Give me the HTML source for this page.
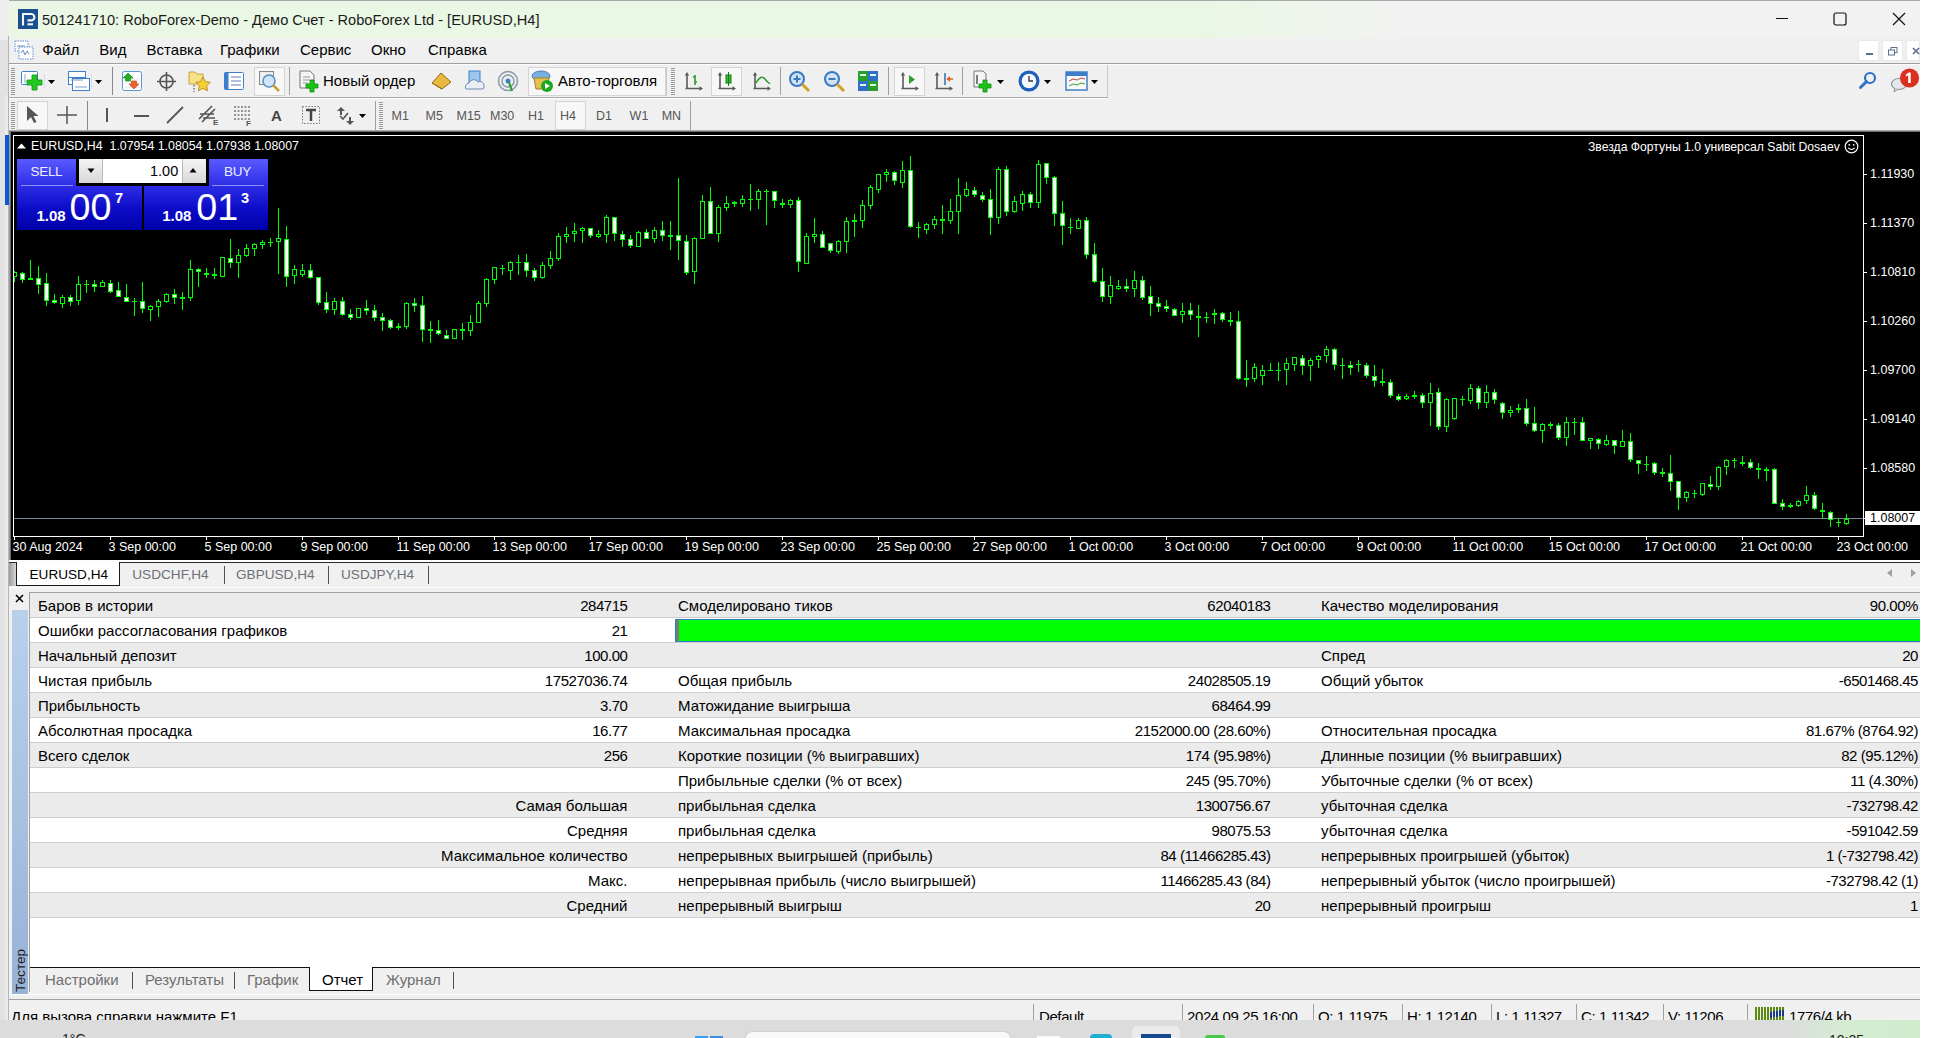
<!DOCTYPE html>
<html><head><meta charset="utf-8">
<style>
*{box-sizing:border-box;margin:0;padding:0}
html,body{width:1938px;height:1038px;overflow:hidden;background:#fff;font-family:"Liberation Sans",sans-serif;color:#000;position:relative}
.a{position:absolute}
.t{position:absolute;white-space:pre;line-height:1}
svg{position:absolute;overflow:visible}
</style></head><body>
<div class="a" style="left:0px;top:0px;width:9px;height:1038px;background:#e2e2e2;"></div>
<div class="a" style="left:0px;top:0px;width:9px;height:40px;background:#eeeeee;"></div>
<div class="a" style="left:5px;top:95px;width:3px;height:925px;background:#ebebeb;"></div>
<div class="a" style="left:8px;top:36px;width:1px;height:984px;background:#b4b4b4;"></div>
<div class="a" style="left:9px;top:0px;width:1911px;height:1020px;background:#f0f0f0;"></div>
<div class="a" style="left:9px;top:0px;width:1911px;height:38px;background:linear-gradient(90deg,#eaf7e5 0px,#eaf7e5 1190px,#f2f2f2 1410px,#f2f2f2 100%);"></div>
<div class="a" style="left:9px;top:0px;width:1911px;height:1px;background:#a8a8a8;"></div>
<svg style="left:18px;top:9px" width="20" height="20" viewBox="0 0 20 20"><rect width="20" height="20" fill="#1a5090"/><path d="M5 16.5V5h8.2a3.2 3.2 0 0 1 0 6.4H9.5" stroke="#f4f6fa" stroke-width="2.1" fill="none"/><path d="M9.5 15.3h5.5" stroke="#f4f6fa" stroke-width="2.1"/></svg>
<div class="t" style="left:42px;top:12.6px;font-size:14.6px;color:#1a1a1a;">501241710: RoboForex-Demo - Демо Счет - RoboForex Ltd - [EURUSD,H4]</div>
<div class="a" style="left:1776px;top:18px;width:12px;height:1px;background:#111;"></div>
<svg style="left:1833px;top:12px" width="14" height="14"><rect x="1" y="1" width="12" height="12" rx="2" fill="none" stroke="#111" stroke-width="1.2"/></svg>
<svg style="left:1892px;top:12px" width="14" height="14"><path d="M1 1L13 13M13 1L1 13" stroke="#111" stroke-width="1.2"/></svg>
<svg style="left:14px;top:40px" width="21" height="21" viewBox="0 0 21 21"><rect x="1" y="1" width="13" height="10" fill="#fff" stroke="#5b8fd6" stroke-dasharray="1.5 1"/><rect x="5" y="7" width="14" height="12" fill="#fff" stroke="#5b8fd6" stroke-dasharray="1.5 1"/><path d="M3 6h8M7 13l2-3 2 5 2-4 2 3" stroke="#6b8fc0" fill="none" stroke-width="1"/></svg>
<div class="t" style="left:42.3px;top:42.3px;font-size:15px;color:#000;">Файл</div>
<div class="t" style="left:99.3px;top:42.3px;font-size:15px;color:#000;">Вид</div>
<div class="t" style="left:146.6px;top:42.3px;font-size:15px;color:#000;">Вставка</div>
<div class="t" style="left:220px;top:42.3px;font-size:15px;color:#000;">Графики</div>
<div class="t" style="left:300px;top:42.3px;font-size:15px;color:#000;">Сервис</div>
<div class="t" style="left:371px;top:42.3px;font-size:15px;color:#000;">Окно</div>
<div class="t" style="left:428px;top:42.3px;font-size:15px;color:#000;">Справка</div>
<div class="a" style="left:1858px;top:40px;width:21px;height:21px;background:#fff;border:1px solid #e8e8e8;border-radius:2px"></div>
<div class="a" style="left:1882px;top:40px;width:21px;height:21px;background:#fff;border:1px solid #e8e8e8;border-radius:2px"></div>
<div class="a" style="left:1906px;top:40px;width:14px;height:21px;background:#fff;border:1px solid #e8e8e8;border-radius:2px"></div>
<div class="a" style="left:1866px;top:53px;width:7px;height:2px;background:#5b6f8c;"></div>
<svg style="left:1888px;top:47px" width="10" height="10"><rect x="3" y="0.5" width="6" height="5" fill="none" stroke="#5b6f8c"/><rect x="0.5" y="3" width="6" height="5" fill="#fbfbfb" stroke="#5b6f8c"/></svg>
<svg style="left:1913px;top:47px" width="7" height="8"><path d="M0 1L6 7M6 1L0 7" stroke="#5b6f8c" stroke-width="1.6"/></svg>
<div class="a" style="left:9px;top:63px;width:1911px;height:1px;background:#a0a0a0;"></div>
<div class="a" style="left:9px;top:64px;width:1911px;height:1px;background:#fdfdfd;"></div>
<div class="a" style="left:1107px;top:65px;width:1px;height:33px;background:#c8c8c8;"></div>
<div class="a" style="left:11px;top:68px;width:4px;height:1px;background:#9a9a9a;"></div>
<div class="a" style="left:11px;top:70px;width:4px;height:1px;background:#9a9a9a;"></div>
<div class="a" style="left:11px;top:72px;width:4px;height:1px;background:#9a9a9a;"></div>
<div class="a" style="left:11px;top:74px;width:4px;height:1px;background:#9a9a9a;"></div>
<div class="a" style="left:11px;top:76px;width:4px;height:1px;background:#9a9a9a;"></div>
<div class="a" style="left:11px;top:78px;width:4px;height:1px;background:#9a9a9a;"></div>
<div class="a" style="left:11px;top:80px;width:4px;height:1px;background:#9a9a9a;"></div>
<div class="a" style="left:11px;top:82px;width:4px;height:1px;background:#9a9a9a;"></div>
<div class="a" style="left:11px;top:84px;width:4px;height:1px;background:#9a9a9a;"></div>
<div class="a" style="left:11px;top:86px;width:4px;height:1px;background:#9a9a9a;"></div>
<div class="a" style="left:11px;top:88px;width:4px;height:1px;background:#9a9a9a;"></div>
<div class="a" style="left:11px;top:90px;width:4px;height:1px;background:#9a9a9a;"></div>
<div class="a" style="left:11px;top:92px;width:4px;height:1px;background:#9a9a9a;"></div>
<div class="a" style="left:11px;top:94px;width:4px;height:1px;background:#9a9a9a;"></div>
<svg style="left:20px;top:70px" width="24" height="22"><rect x="1.5" y="1.5" width="16" height="13" rx="1" fill="#fff" stroke="#3d7fcc"/><path d="M5 4v9" stroke="#8aa7c8"/><path d="M12 5h5v5h5v5h-5v5h-5v-5H7v-5h5z" fill="#22c822" stroke="#129012" stroke-width="0.8"/></svg>
<div class="a" style="left:44px;top:74px;width:1px;height:15px;background:#cfe0f0;"></div>
<svg style="left:48px;top:80px" width="8" height="5"><path d="M0 0h7L3.5 4z" fill="#000"/></svg>
<svg style="left:67px;top:70px" width="24" height="22"><rect x="1.5" y="1.5" width="17" height="13" fill="#fff" stroke="#3d7fcc"/><rect x="5.5" y="8.5" width="17" height="12" fill="#fff" stroke="#3d7fcc"/><rect x="1.5" y="1.5" width="17" height="6" fill="#fff" stroke="#3d7fcc"/><path d="M4 10h12M8 17h12" stroke="#7a9ac0"/></svg>
<div class="a" style="left:91px;top:74px;width:1px;height:15px;background:#cfe0f0;"></div>
<svg style="left:95px;top:80px" width="8" height="5"><path d="M0 0h7L3.5 4z" fill="#000"/></svg>
<div class="a" style="left:112px;top:67px;width:1px;height:28px;background:#8a8a8a;"></div>
<svg style="left:121px;top:70px" width="23" height="22"><rect x="1.5" y="1.5" width="19" height="19" rx="2" fill="#fff" stroke="#5a96dc"/><path d="M4 9h15M4 13h15M4 17h15M12 4v15" stroke="#e4e4e4"/><path d="M7 3l5 5H9.5v3h-5V8H2z" fill="#22b022" stroke="#138013" stroke-width="0.6"/><path d="M13 19l-5-5h2.5v-3h5v3H18z" fill="#f06030" stroke="#c04010" stroke-width="0.6"/></svg>
<svg style="left:156px;top:71px" width="21" height="21"><circle cx="10.5" cy="10.5" r="6.5" fill="none" stroke="#555" stroke-width="1.6"/><path d="M10.5 1v19M1 10.5h19" stroke="#555" stroke-width="1.6"/></svg>
<svg style="left:188px;top:70px" width="24" height="23"><path d="M1 2h6l2 2h6v10H1z" fill="#f8e088" stroke="#c8a040"/><path d="M6 15v7" stroke="#333" stroke-dasharray="1.5 1.5"/><path d="M15 7l2.3 4.6 5 .7-3.6 3.5.9 5-4.6-2.4-4.6 2.4.9-5-3.6-3.5 5-.7z" fill="#f6d030" stroke="#b08010" stroke-width="0.8"/></svg>
<svg style="left:223px;top:71px" width="22" height="20"><rect x="1.5" y="1.5" width="19" height="17" rx="1" fill="#fff" stroke="#3d7fcc"/><rect x="1.5" y="1.5" width="4" height="17" fill="#3d7fcc"/><path d="M8 6h10M8 10h10M8 14h10" stroke="#5f7fb0"/></svg>
<div class="a" style="left:254px;top:67px;width:31px;height:29px;background:#f7f7f7;border:1px solid #d4d4d4"></div>
<svg style="left:258px;top:70px" width="24" height="23"><rect x="1.5" y="1.5" width="14" height="13" fill="#eee" stroke="#888"/><circle cx="11" cy="11" r="6" fill="#cfe6f8" stroke="#5a8cc0" stroke-width="1.5"/><path d="M15 15l6 6" stroke="#c8a030" stroke-width="2.5"/></svg>
<div class="a" style="left:289px;top:67px;width:1px;height:28px;background:#a0a0a0;"></div>
<svg style="left:298px;top:70px" width="24" height="24"><path d="M2 1h10l4 4v13H2z" fill="#f4f4f4" stroke="#777"/><path d="M5 7h7M5 10h7M5 13h5" stroke="#999"/><path d="M12 10h4v4h4v4h-4v4h-4v-4H8v-4h4z" fill="#19c419" stroke="#0f8a0f" stroke-width="0.8"/></svg>
<div class="t" style="left:323px;top:72.6px;font-size:15px;color:#000;">Новый ордер</div>
<svg style="left:430px;top:71px" width="23" height="20"><path d="M2 12l9-10 10 9-9 7z" fill="#e8b840" stroke="#9a6a10"/><path d="M2 12l10 6" stroke="#9a6a10"/></svg>
<svg style="left:464px;top:70px" width="23" height="22"><rect x="5" y="1" width="11" height="12" fill="#9cc8f0" stroke="#3d7fcc"/><path d="M2 19a4 4 0 0 1 3-6 5 5 0 0 1 9-1 4 4 0 0 1 6 4 3 3 0 0 1-1 3z" fill="#e8eef6" stroke="#6d8bb0"/></svg>
<svg style="left:497px;top:70px" width="23" height="22"><circle cx="11" cy="11" r="9.5" fill="none" stroke="#8a9aac" stroke-width="1.5"/><circle cx="11" cy="11" r="6" fill="none" stroke="#8a9aac" stroke-width="1.5"/><circle cx="11" cy="11" r="2.5" fill="#3d7fcc"/><path d="M12 12l3 9" stroke="#2a9a2a" stroke-width="2"/></svg>
<div class="a" style="left:528px;top:67px;width:138px;height:29px;background:#f7f7f7;border:1px solid #d4d4d4"></div>
<svg style="left:531px;top:70px" width="24" height="23"><ellipse cx="10" cy="6" rx="9" ry="5" fill="#7ab0e0" stroke="#4a80b8"/><path d="M3 8h15l-2 11H5z" fill="#e6c050" stroke="#a08020"/><circle cx="16" cy="16" r="6" fill="#1fa81f"/><path d="M14 13v6l5-3z" fill="#fff"/></svg>
<div class="t" style="left:558px;top:72.6px;font-size:15px;color:#000;">Авто-торговля</div>
<div class="a" style="left:671px;top:68px;width:4px;height:1px;background:#9a9a9a;"></div>
<div class="a" style="left:671px;top:70px;width:4px;height:1px;background:#9a9a9a;"></div>
<div class="a" style="left:671px;top:72px;width:4px;height:1px;background:#9a9a9a;"></div>
<div class="a" style="left:671px;top:74px;width:4px;height:1px;background:#9a9a9a;"></div>
<div class="a" style="left:671px;top:76px;width:4px;height:1px;background:#9a9a9a;"></div>
<div class="a" style="left:671px;top:78px;width:4px;height:1px;background:#9a9a9a;"></div>
<div class="a" style="left:671px;top:80px;width:4px;height:1px;background:#9a9a9a;"></div>
<div class="a" style="left:671px;top:82px;width:4px;height:1px;background:#9a9a9a;"></div>
<div class="a" style="left:671px;top:84px;width:4px;height:1px;background:#9a9a9a;"></div>
<div class="a" style="left:671px;top:86px;width:4px;height:1px;background:#9a9a9a;"></div>
<div class="a" style="left:671px;top:88px;width:4px;height:1px;background:#9a9a9a;"></div>
<div class="a" style="left:671px;top:90px;width:4px;height:1px;background:#9a9a9a;"></div>
<div class="a" style="left:671px;top:92px;width:4px;height:1px;background:#9a9a9a;"></div>
<div class="a" style="left:671px;top:94px;width:4px;height:1px;background:#9a9a9a;"></div>
<div class="a" style="left:666px;top:67px;width:1px;height:29px;background:#c8c8c8;"></div>
<svg style="left:684px;top:70px" width="22" height="22"><path d="M3 4.5v14.5M1.5 18.5h15" stroke="#5a5a5a" stroke-width="1.6" fill="none"/><path d="M3 2l-2.2 3.5h4.4zM19 18.5l-3.5-2.2v4.4z" fill="#5a5a5a"/><path d="M11 5v10M9 7h2M11 12h2" stroke="#2a9a2a" stroke-width="1.6"/></svg>
<div class="a" style="left:711px;top:67px;width:31px;height:29px;background:#f7f7f7;border:1px solid #d4d4d4"></div>
<svg style="left:717px;top:70px" width="22" height="22"><path d="M3 4.5v14.5M1.5 18.5h15" stroke="#5a5a5a" stroke-width="1.6" fill="none"/><path d="M3 2l-2.2 3.5h4.4zM19 18.5l-3.5-2.2v4.4z" fill="#5a5a5a"/><rect x="9" y="5" width="5" height="8" fill="#30c030" stroke="#1a7a1a"/><path d="M11.5 2v14" stroke="#1a7a1a"/></svg>
<svg style="left:752px;top:70px" width="22" height="22"><path d="M3 4.5v14.5M1.5 18.5h15" stroke="#5a5a5a" stroke-width="1.6" fill="none"/><path d="M3 2l-2.2 3.5h4.4zM19 18.5l-3.5-2.2v4.4z" fill="#5a5a5a"/><path d="M4 13q5-9 9-4t5 4" stroke="#2a9a2a" stroke-width="1.5" fill="none"/></svg>
<div class="a" style="left:780px;top:67px;width:1px;height:28px;background:#a0a0a0;"></div>
<svg style="left:788px;top:70px" width="24" height="23"><circle cx="9" cy="9" r="7" fill="#cfe3f7" stroke="#3a78c0" stroke-width="2"/><path d="M5.5 9h7M9 5.5v7" stroke="#3a78c0" stroke-width="2"/><path d="M14 14l7 7" stroke="#d0a020" stroke-width="3"/></svg>
<svg style="left:823px;top:70px" width="24" height="23"><circle cx="9" cy="9" r="7" fill="#cfe3f7" stroke="#3a78c0" stroke-width="2"/><path d="M5.5 9h7" stroke="#3a78c0" stroke-width="2"/><path d="M14 14l7 7" stroke="#d0a020" stroke-width="3"/></svg>
<svg style="left:857px;top:70px" width="22" height="22"><rect x="1" y="1" width="10" height="10" fill="#2aa02a"/><rect x="11" y="1" width="10" height="10" fill="#2f6fc8"/><rect x="1" y="11" width="10" height="10" fill="#2f6fc8"/><rect x="11" y="11" width="10" height="10" fill="#2aa02a"/><path d="M3 5h6M13 5h6M3 15h6M13 15h6" stroke="#dfe" stroke-width="2"/></svg>
<div class="a" style="left:888px;top:67px;width:1px;height:28px;background:#a0a0a0;"></div>
<div class="a" style="left:894px;top:67px;width:31px;height:29px;background:#f7f7f7;border:1px solid #d4d4d4"></div>
<svg style="left:900px;top:70px" width="22" height="22"><path d="M3 4.5v14.5M1.5 18.5h15" stroke="#5a5a5a" stroke-width="1.6" fill="none"/><path d="M3 2l-2.2 3.5h4.4zM19 18.5l-3.5-2.2v4.4z" fill="#5a5a5a"/><path d="M9 5v9l6-4.5z" fill="#2aa02a"/></svg>
<svg style="left:934px;top:70px" width="22" height="22"><path d="M3 4.5v14.5M1.5 18.5h15" stroke="#5a5a5a" stroke-width="1.6" fill="none"/><path d="M3 2l-2.2 3.5h4.4zM19 18.5l-3.5-2.2v4.4z" fill="#5a5a5a"/><path d="M11 3v12" stroke="#2a70b0" stroke-width="1.5"/><path d="M13 9h6" stroke="#e85a20" stroke-width="1.5"/><path d="M12.5 9l3.5-3v6z" fill="#e85a20"/></svg>
<div class="a" style="left:962px;top:67px;width:1px;height:28px;background:#a0a0a0;"></div>
<svg style="left:972px;top:70px" width="24" height="24"><path d="M2 1h9l3 3v13H2z" fill="#f4f4f4" stroke="#777"/><path d="M5 5v9" stroke="#555" stroke-width="1.5"/><path d="M11 10h4v4h4v4h-4v4h-4v-4H7v-4h4z" fill="#19c419" stroke="#0f8a0f" stroke-width="0.8"/></svg>
<svg style="left:997px;top:80px" width="8" height="5"><path d="M0 0h7L3.5 4z" fill="#000"/></svg>
<svg style="left:1018px;top:70px" width="23" height="23"><circle cx="11" cy="11" r="10.5" fill="#1f5fb8"/><circle cx="11" cy="11" r="7.3" fill="#f4f7fb"/><path d="M11 6v5h4" stroke="#333" stroke-width="1.3" fill="none"/></svg>
<svg style="left:1044px;top:80px" width="8" height="5"><path d="M0 0h7L3.5 4z" fill="#000"/></svg>
<svg style="left:1065px;top:71px" width="23" height="20"><rect x="1" y="1" width="21" height="18" fill="#f8f8f8" stroke="#3d7fcc" stroke-width="1.5"/><rect x="1" y="1" width="21" height="4" fill="#3d7fcc"/><path d="M4 10l4-2 4 1 4-2 4 1" stroke="#c04040" fill="none"/><path d="M4 15l4-2 4 1 4-2 4 1" stroke="#30a030" fill="none"/></svg>
<svg style="left:1091px;top:80px" width="8" height="5"><path d="M0 0h7L3.5 4z" fill="#000"/></svg>
<svg style="left:1858px;top:71px" width="20" height="19"><circle cx="12" cy="7" r="5" fill="none" stroke="#3070c8" stroke-width="2.2"/><path d="M8.5 10.5l-6 6" stroke="#3070c8" stroke-width="3" stroke-linecap="round"/></svg>
<svg style="left:1890px;top:66px" width="30" height="28"><ellipse cx="9" cy="18" rx="7.5" ry="5.5" fill="#e4e8ee" stroke="#8a9098" stroke-width="1.2"/><path d="M5 22l-1 4 4-3" fill="#e4e8ee" stroke="#8a9098"/><circle cx="19.5" cy="12" r="9.6" fill="#d93020"/><path d="M18.2 17V9.3l-2.4 1.4V8.4l3-1.9h1.9V17z" fill="#fff"/></svg>
<div class="a" style="left:9px;top:97px;width:1099px;height:1px;background:#a8a8a8;"></div>
<div class="a" style="left:9px;top:98px;width:1099px;height:1px;background:#fdfdfd;"></div>
<div class="a" style="left:11px;top:102px;width:4px;height:1px;background:#9a9a9a;"></div>
<div class="a" style="left:11px;top:104px;width:4px;height:1px;background:#9a9a9a;"></div>
<div class="a" style="left:11px;top:106px;width:4px;height:1px;background:#9a9a9a;"></div>
<div class="a" style="left:11px;top:108px;width:4px;height:1px;background:#9a9a9a;"></div>
<div class="a" style="left:11px;top:110px;width:4px;height:1px;background:#9a9a9a;"></div>
<div class="a" style="left:11px;top:112px;width:4px;height:1px;background:#9a9a9a;"></div>
<div class="a" style="left:11px;top:114px;width:4px;height:1px;background:#9a9a9a;"></div>
<div class="a" style="left:11px;top:116px;width:4px;height:1px;background:#9a9a9a;"></div>
<div class="a" style="left:11px;top:118px;width:4px;height:1px;background:#9a9a9a;"></div>
<div class="a" style="left:11px;top:120px;width:4px;height:1px;background:#9a9a9a;"></div>
<div class="a" style="left:11px;top:122px;width:4px;height:1px;background:#9a9a9a;"></div>
<div class="a" style="left:11px;top:124px;width:4px;height:1px;background:#9a9a9a;"></div>
<div class="a" style="left:11px;top:126px;width:4px;height:1px;background:#9a9a9a;"></div>
<div class="a" style="left:11px;top:128px;width:4px;height:1px;background:#9a9a9a;"></div>
<div class="a" style="left:17px;top:101px;width:31px;height:29px;background:#f7f7f7;border:1px solid #d4d4d4"></div>
<svg style="left:25px;top:105px" width="16" height="20"><path d="M2 1v15l4-4 3 6 2.5-1-3-6h5z" fill="#555"/></svg>
<svg style="left:56px;top:105px" width="22" height="20"><path d="M11 1v18M1 10h20" stroke="#555" stroke-width="1.5"/></svg>
<div class="a" style="left:87px;top:101px;width:1px;height:29px;background:#8a8a8a;"></div>
<div class="a" style="left:106px;top:108px;width:2px;height:14px;background:#555;"></div>
<div class="a" style="left:134px;top:115px;width:15px;height:2px;background:#555;"></div>
<svg style="left:166px;top:106px" width="18" height="18"><path d="M1 17L17 1" stroke="#555" stroke-width="1.8"/></svg>
<svg style="left:198px;top:104px" width="23" height="22"><path d="M1 15L14 2M4 18L17 5M2 10h14M5 14h12" stroke="#555" stroke-width="1.6"/><text x="15" y="21" font-size="8" font-weight="bold" fill="#555" style="font-family:Liberation Sans,sans-serif">E</text></svg>
<svg style="left:233px;top:105px" width="21" height="22"><path d="M1 2h17M1 6h17M1 10h17M1 14h17" stroke="#777" stroke-width="1.4" stroke-dasharray="2 1.5"/><text x="13" y="21" font-size="8" font-weight="bold" fill="#555" style="font-family:Liberation Sans,sans-serif">F</text></svg>
<div class="t" style="left:271px;top:107.5px;font-size:15px;color:#444;font-weight:bold">A</div>
<svg style="left:302px;top:106px" width="18" height="18"><rect x="0.5" y="0.5" width="17" height="17" fill="none" stroke="#777" stroke-dasharray="1.5 1.5"/><path d="M4 4h10M9 4v11" stroke="#444" stroke-width="2.5"/></svg>
<svg style="left:336px;top:106px" width="20" height="20"><path d="M5 1l4 4H6v4H4V5H1z" fill="#555"/><path d="M4 10l3 3 5-6" stroke="#555" stroke-width="1.6" fill="none"/><path d="M14 19l-4-4h3v-4h2v4h3z" fill="#555"/></svg>
<svg style="left:359px;top:114px" width="8" height="5"><path d="M0 0h7L3.5 4z" fill="#000"/></svg>
<div class="a" style="left:375px;top:101px;width:1px;height:29px;background:#a0a0a0;"></div>
<div class="a" style="left:379px;top:102px;width:4px;height:1px;background:#9a9a9a;"></div>
<div class="a" style="left:379px;top:104px;width:4px;height:1px;background:#9a9a9a;"></div>
<div class="a" style="left:379px;top:106px;width:4px;height:1px;background:#9a9a9a;"></div>
<div class="a" style="left:379px;top:108px;width:4px;height:1px;background:#9a9a9a;"></div>
<div class="a" style="left:379px;top:110px;width:4px;height:1px;background:#9a9a9a;"></div>
<div class="a" style="left:379px;top:112px;width:4px;height:1px;background:#9a9a9a;"></div>
<div class="a" style="left:379px;top:114px;width:4px;height:1px;background:#9a9a9a;"></div>
<div class="a" style="left:379px;top:116px;width:4px;height:1px;background:#9a9a9a;"></div>
<div class="a" style="left:379px;top:118px;width:4px;height:1px;background:#9a9a9a;"></div>
<div class="a" style="left:379px;top:120px;width:4px;height:1px;background:#9a9a9a;"></div>
<div class="a" style="left:379px;top:122px;width:4px;height:1px;background:#9a9a9a;"></div>
<div class="a" style="left:379px;top:124px;width:4px;height:1px;background:#9a9a9a;"></div>
<div class="a" style="left:379px;top:126px;width:4px;height:1px;background:#9a9a9a;"></div>
<div class="a" style="left:379px;top:128px;width:4px;height:1px;background:#9a9a9a;"></div>
<div class="t" style="left:391.6px;top:109.5px;font-size:12.5px;color:#555;">M1</div>
<div class="t" style="left:425.5px;top:109.5px;font-size:12.5px;color:#555;">M5</div>
<div class="t" style="left:456.5px;top:109.5px;font-size:12.5px;color:#555;">M15</div>
<div class="t" style="left:490px;top:109.5px;font-size:12.5px;color:#555;">M30</div>
<div class="t" style="left:528px;top:109.5px;font-size:12.5px;color:#555;">H1</div>
<div class="a" style="left:555px;top:101px;width:31px;height:29px;background:#f7f7f7;border:1px solid #d4d4d4"></div>
<div class="t" style="left:560px;top:109.5px;font-size:12.5px;color:#555;">H4</div>
<div class="t" style="left:596px;top:109.5px;font-size:12.5px;color:#555;">D1</div>
<div class="t" style="left:629.6px;top:109.5px;font-size:12.5px;color:#555;">W1</div>
<div class="t" style="left:661.7px;top:109.5px;font-size:12.5px;color:#555;">MN</div>
<div class="a" style="left:690px;top:101px;width:1px;height:29px;background:#a0a0a0;"></div>
<div class="a" style="left:11px;top:132px;width:1909px;height:428px;background:#000;"></div>
<div class="a" style="left:9px;top:131px;width:2px;height:430px;background:linear-gradient(90deg,#b8b8b8,#505050);"></div>
<div class="a" style="left:9px;top:130px;width:1911px;height:2px;background:linear-gradient(180deg,#c8c8c8,#505050);"></div>
<div class="a" style="left:5px;top:135px;width:4px;height:70px;background:#0a5ad8;"></div>
<div class="a" style="left:13px;top:135px;width:1851px;height:1px;background:#fff;"></div>
<div class="a" style="left:13px;top:135px;width:1px;height:402px;background:#fff;"></div>
<div class="a" style="left:1863px;top:135px;width:1px;height:402px;background:#fff;"></div>
<div class="a" style="left:13px;top:536px;width:1851px;height:1px;background:#fff;"></div>
<div class="a" style="left:14px;top:518px;width:1849px;height:1px;background:#7a8796;"></div>
<svg style="left:0;top:0" width="1938" height="1038"><defs><clipPath id="pc"><rect x="14" y="136" width="1849" height="400"/></clipPath></defs><g clip-path="url(#pc)" fill="#00ff00" shape-rendering="crispEdges"><rect x="14" y="271" width="1" height="11"/><rect x="12" y="272" width="5" height="5"/><rect x="13" y="273" width="3" height="3" fill="#000"/><rect x="22" y="272" width="1" height="11"/><rect x="20" y="273" width="5" height="7"/><rect x="21" y="274" width="3" height="5" fill="#fff"/><rect x="30" y="260" width="1" height="20"/><rect x="28" y="278" width="5" height="2"/><rect x="38" y="266" width="1" height="28"/><rect x="36" y="278" width="5" height="7"/><rect x="37" y="279" width="3" height="5" fill="#fff"/><rect x="46" y="273" width="1" height="33"/><rect x="44" y="283" width="5" height="18"/><rect x="45" y="284" width="3" height="16" fill="#fff"/><rect x="54" y="294" width="1" height="10"/><rect x="52" y="300" width="5" height="3"/><rect x="53" y="301" width="3" height="1" fill="#fff"/><rect x="62" y="295" width="1" height="13"/><rect x="60" y="297" width="5" height="7"/><rect x="61" y="298" width="3" height="5" fill="#000"/><rect x="70" y="295" width="1" height="11"/><rect x="68" y="297" width="5" height="5"/><rect x="69" y="298" width="3" height="3" fill="#fff"/><rect x="78" y="276" width="1" height="29"/><rect x="76" y="284" width="5" height="17"/><rect x="77" y="285" width="3" height="15" fill="#000"/><rect x="86" y="280" width="1" height="13"/><rect x="84" y="284" width="5" height="1"/><rect x="94" y="280" width="1" height="12"/><rect x="92" y="284" width="5" height="3"/><rect x="93" y="285" width="3" height="1" fill="#fff"/><rect x="102" y="280" width="1" height="7"/><rect x="100" y="282" width="5" height="5"/><rect x="101" y="283" width="3" height="3" fill="#000"/><rect x="110" y="280" width="1" height="13"/><rect x="108" y="283" width="5" height="9"/><rect x="109" y="284" width="3" height="7" fill="#fff"/><rect x="118" y="282" width="1" height="15"/><rect x="116" y="290" width="5" height="7"/><rect x="117" y="291" width="3" height="5" fill="#fff"/><rect x="126" y="284" width="1" height="18"/><rect x="124" y="297" width="5" height="5"/><rect x="125" y="298" width="3" height="3" fill="#fff"/><rect x="134" y="298" width="1" height="18"/><rect x="132" y="301" width="5" height="1"/><rect x="142" y="282" width="1" height="31"/><rect x="140" y="301" width="5" height="8"/><rect x="141" y="302" width="3" height="6" fill="#fff"/><rect x="150" y="305" width="1" height="16"/><rect x="148" y="306" width="5" height="4"/><rect x="149" y="307" width="3" height="2" fill="#000"/><rect x="158" y="299" width="1" height="18"/><rect x="156" y="301" width="5" height="6"/><rect x="157" y="302" width="3" height="4" fill="#000"/><rect x="166" y="293" width="1" height="10"/><rect x="164" y="294" width="5" height="8"/><rect x="165" y="295" width="3" height="6" fill="#000"/><rect x="174" y="289" width="1" height="15"/><rect x="172" y="294" width="5" height="4"/><rect x="173" y="295" width="3" height="2" fill="#fff"/><rect x="182" y="292" width="1" height="18"/><rect x="180" y="297" width="5" height="2"/><rect x="190" y="260" width="1" height="41"/><rect x="188" y="269" width="5" height="29"/><rect x="189" y="270" width="3" height="27" fill="#000"/><rect x="198" y="268" width="1" height="19"/><rect x="196" y="269" width="5" height="3"/><rect x="197" y="270" width="3" height="1" fill="#fff"/><rect x="206" y="268" width="1" height="10"/><rect x="204" y="273" width="5" height="2"/><rect x="214" y="268" width="1" height="11"/><rect x="212" y="274" width="5" height="2"/><rect x="222" y="257" width="1" height="20"/><rect x="220" y="257" width="5" height="20"/><rect x="221" y="258" width="3" height="18" fill="#000"/><rect x="230" y="239" width="1" height="29"/><rect x="228" y="258" width="5" height="5"/><rect x="229" y="259" width="3" height="3" fill="#fff"/><rect x="238" y="249" width="1" height="29"/><rect x="236" y="255" width="5" height="8"/><rect x="237" y="256" width="3" height="6" fill="#000"/><rect x="246" y="244" width="1" height="13"/><rect x="244" y="248" width="5" height="8"/><rect x="245" y="249" width="3" height="6" fill="#000"/><rect x="254" y="243" width="1" height="13"/><rect x="252" y="244" width="5" height="5"/><rect x="253" y="245" width="3" height="3" fill="#000"/><rect x="262" y="240" width="1" height="9"/><rect x="260" y="242" width="5" height="3"/><rect x="261" y="243" width="3" height="1" fill="#000"/><rect x="270" y="238" width="1" height="9"/><rect x="268" y="242" width="5" height="1"/><rect x="278" y="208" width="1" height="66"/><rect x="276" y="238" width="5" height="4"/><rect x="277" y="239" width="3" height="2" fill="#000"/><rect x="286" y="226" width="1" height="61"/><rect x="284" y="239" width="5" height="38"/><rect x="285" y="240" width="3" height="36" fill="#fff"/><rect x="294" y="265" width="1" height="19"/><rect x="292" y="269" width="5" height="7"/><rect x="293" y="270" width="3" height="5" fill="#000"/><rect x="302" y="264" width="1" height="13"/><rect x="300" y="270" width="5" height="5"/><rect x="301" y="271" width="3" height="3" fill="#000"/><rect x="310" y="264" width="1" height="15"/><rect x="308" y="270" width="5" height="8"/><rect x="309" y="271" width="3" height="6" fill="#fff"/><rect x="318" y="277" width="1" height="28"/><rect x="316" y="277" width="5" height="26"/><rect x="317" y="278" width="3" height="24" fill="#fff"/><rect x="326" y="292" width="1" height="21"/><rect x="324" y="302" width="5" height="8"/><rect x="325" y="303" width="3" height="6" fill="#fff"/><rect x="334" y="298" width="1" height="17"/><rect x="332" y="301" width="5" height="9"/><rect x="333" y="302" width="3" height="7" fill="#000"/><rect x="342" y="297" width="1" height="19"/><rect x="340" y="301" width="5" height="14"/><rect x="341" y="302" width="3" height="12" fill="#fff"/><rect x="350" y="309" width="1" height="11"/><rect x="348" y="314" width="5" height="4"/><rect x="349" y="315" width="3" height="2" fill="#fff"/><rect x="358" y="308" width="1" height="10"/><rect x="356" y="308" width="5" height="10"/><rect x="357" y="309" width="3" height="8" fill="#000"/><rect x="366" y="300" width="1" height="15"/><rect x="364" y="308" width="5" height="3"/><rect x="365" y="309" width="3" height="1" fill="#fff"/><rect x="374" y="305" width="1" height="16"/><rect x="372" y="310" width="5" height="8"/><rect x="373" y="311" width="3" height="6" fill="#fff"/><rect x="382" y="313" width="1" height="18"/><rect x="380" y="317" width="5" height="4"/><rect x="381" y="318" width="3" height="2" fill="#fff"/><rect x="390" y="319" width="1" height="10"/><rect x="388" y="320" width="5" height="8"/><rect x="389" y="321" width="3" height="6" fill="#fff"/><rect x="398" y="323" width="1" height="7"/><rect x="396" y="326" width="5" height="2"/><rect x="406" y="302" width="1" height="27"/><rect x="404" y="303" width="5" height="24"/><rect x="405" y="304" width="3" height="22" fill="#000"/><rect x="414" y="298" width="1" height="14"/><rect x="412" y="303" width="5" height="3"/><rect x="413" y="304" width="3" height="1" fill="#fff"/><rect x="422" y="296" width="1" height="46"/><rect x="420" y="305" width="5" height="25"/><rect x="421" y="306" width="3" height="23" fill="#fff"/><rect x="430" y="321" width="1" height="22"/><rect x="428" y="329" width="5" height="2"/><rect x="438" y="320" width="1" height="15"/><rect x="436" y="330" width="5" height="4"/><rect x="437" y="331" width="3" height="2" fill="#fff"/><rect x="446" y="330" width="1" height="9"/><rect x="444" y="335" width="5" height="4"/><rect x="445" y="336" width="3" height="2" fill="#fff"/><rect x="454" y="329" width="1" height="10"/><rect x="452" y="329" width="5" height="10"/><rect x="453" y="330" width="3" height="8" fill="#000"/><rect x="462" y="323" width="1" height="17"/><rect x="460" y="329" width="5" height="2"/><rect x="470" y="315" width="1" height="21"/><rect x="468" y="322" width="5" height="9"/><rect x="469" y="323" width="3" height="7" fill="#000"/><rect x="478" y="301" width="1" height="22"/><rect x="476" y="303" width="5" height="20"/><rect x="477" y="304" width="3" height="18" fill="#000"/><rect x="486" y="278" width="1" height="29"/><rect x="484" y="279" width="5" height="25"/><rect x="485" y="280" width="3" height="23" fill="#000"/><rect x="494" y="267" width="1" height="17"/><rect x="492" y="267" width="5" height="13"/><rect x="493" y="268" width="3" height="11" fill="#000"/><rect x="502" y="265" width="1" height="10"/><rect x="500" y="268" width="5" height="1"/><rect x="510" y="261" width="1" height="19"/><rect x="508" y="262" width="5" height="9"/><rect x="509" y="263" width="3" height="7" fill="#000"/><rect x="518" y="255" width="1" height="20"/><rect x="516" y="262" width="5" height="1"/><rect x="526" y="254" width="1" height="23"/><rect x="524" y="262" width="5" height="9"/><rect x="525" y="263" width="3" height="7" fill="#fff"/><rect x="534" y="268" width="1" height="13"/><rect x="532" y="270" width="5" height="8"/><rect x="533" y="271" width="3" height="6" fill="#fff"/><rect x="542" y="262" width="1" height="17"/><rect x="540" y="265" width="5" height="13"/><rect x="541" y="266" width="3" height="11" fill="#000"/><rect x="550" y="251" width="1" height="18"/><rect x="548" y="258" width="5" height="8"/><rect x="549" y="259" width="3" height="6" fill="#000"/><rect x="558" y="233" width="1" height="28"/><rect x="556" y="236" width="5" height="23"/><rect x="557" y="237" width="3" height="21" fill="#000"/><rect x="566" y="227" width="1" height="16"/><rect x="564" y="234" width="5" height="3"/><rect x="565" y="235" width="3" height="1" fill="#000"/><rect x="574" y="223" width="1" height="19"/><rect x="572" y="231" width="5" height="3"/><rect x="573" y="232" width="3" height="1" fill="#000"/><rect x="582" y="227" width="1" height="16"/><rect x="580" y="228" width="5" height="3"/><rect x="581" y="229" width="3" height="1" fill="#000"/><rect x="590" y="228" width="1" height="10"/><rect x="588" y="228" width="5" height="8"/><rect x="589" y="229" width="3" height="6" fill="#fff"/><rect x="598" y="230" width="1" height="8"/><rect x="596" y="234" width="5" height="3"/><rect x="597" y="235" width="3" height="1" fill="#000"/><rect x="606" y="215" width="1" height="28"/><rect x="604" y="217" width="5" height="18"/><rect x="605" y="218" width="3" height="16" fill="#000"/><rect x="614" y="217" width="1" height="24"/><rect x="612" y="217" width="5" height="17"/><rect x="613" y="218" width="3" height="15" fill="#fff"/><rect x="622" y="231" width="1" height="16"/><rect x="620" y="234" width="5" height="6"/><rect x="621" y="235" width="3" height="4" fill="#fff"/><rect x="630" y="235" width="1" height="13"/><rect x="628" y="239" width="5" height="7"/><rect x="629" y="240" width="3" height="5" fill="#fff"/><rect x="638" y="231" width="1" height="16"/><rect x="636" y="232" width="5" height="15"/><rect x="637" y="233" width="3" height="13" fill="#000"/><rect x="646" y="229" width="1" height="10"/><rect x="644" y="232" width="5" height="7"/><rect x="645" y="233" width="3" height="5" fill="#fff"/><rect x="654" y="227" width="1" height="16"/><rect x="652" y="230" width="5" height="9"/><rect x="653" y="231" width="3" height="7" fill="#000"/><rect x="662" y="221" width="1" height="20"/><rect x="660" y="230" width="5" height="6"/><rect x="661" y="231" width="3" height="4" fill="#fff"/><rect x="670" y="221" width="1" height="29"/><rect x="668" y="235" width="5" height="2"/><rect x="678" y="178" width="1" height="82"/><rect x="676" y="235" width="5" height="6"/><rect x="677" y="236" width="3" height="4" fill="#fff"/><rect x="686" y="235" width="1" height="40"/><rect x="684" y="241" width="5" height="32"/><rect x="685" y="242" width="3" height="30" fill="#fff"/><rect x="694" y="237" width="1" height="47"/><rect x="692" y="238" width="5" height="34"/><rect x="693" y="239" width="3" height="32" fill="#000"/><rect x="702" y="195" width="1" height="44"/><rect x="700" y="201" width="5" height="38"/><rect x="701" y="202" width="3" height="36" fill="#000"/><rect x="710" y="187" width="1" height="47"/><rect x="708" y="201" width="5" height="33"/><rect x="709" y="202" width="3" height="31" fill="#fff"/><rect x="718" y="205" width="1" height="37"/><rect x="716" y="207" width="5" height="27"/><rect x="717" y="208" width="3" height="25" fill="#000"/><rect x="726" y="196" width="1" height="15"/><rect x="724" y="203" width="5" height="5"/><rect x="725" y="204" width="3" height="3" fill="#000"/><rect x="734" y="201" width="1" height="6"/><rect x="732" y="202" width="5" height="2"/><rect x="742" y="195" width="1" height="12"/><rect x="740" y="199" width="5" height="5"/><rect x="741" y="200" width="3" height="3" fill="#000"/><rect x="750" y="184" width="1" height="27"/><rect x="748" y="199" width="5" height="1"/><rect x="758" y="189" width="1" height="20"/><rect x="756" y="191" width="5" height="9"/><rect x="757" y="192" width="3" height="7" fill="#000"/><rect x="766" y="189" width="1" height="36"/><rect x="764" y="191" width="5" height="1"/><rect x="774" y="191" width="1" height="17"/><rect x="772" y="191" width="5" height="10"/><rect x="773" y="192" width="3" height="8" fill="#fff"/><rect x="782" y="199" width="1" height="9"/><rect x="780" y="203" width="5" height="2"/><rect x="790" y="199" width="1" height="9"/><rect x="788" y="200" width="5" height="5"/><rect x="789" y="201" width="3" height="3" fill="#000"/><rect x="798" y="197" width="1" height="75"/><rect x="796" y="200" width="5" height="62"/><rect x="797" y="201" width="3" height="60" fill="#fff"/><rect x="806" y="233" width="1" height="31"/><rect x="804" y="236" width="5" height="28"/><rect x="805" y="237" width="3" height="26" fill="#000"/><rect x="814" y="218" width="1" height="25"/><rect x="812" y="234" width="5" height="3"/><rect x="813" y="235" width="3" height="1" fill="#000"/><rect x="822" y="231" width="1" height="17"/><rect x="820" y="234" width="5" height="14"/><rect x="821" y="235" width="3" height="12" fill="#fff"/><rect x="830" y="243" width="1" height="10"/><rect x="828" y="243" width="5" height="8"/><rect x="829" y="244" width="3" height="6" fill="#fff"/><rect x="838" y="240" width="1" height="14"/><rect x="836" y="241" width="5" height="11"/><rect x="837" y="242" width="3" height="9" fill="#000"/><rect x="846" y="217" width="1" height="36"/><rect x="844" y="221" width="5" height="21"/><rect x="845" y="222" width="3" height="19" fill="#000"/><rect x="854" y="214" width="1" height="23"/><rect x="852" y="220" width="5" height="2"/><rect x="862" y="200" width="1" height="28"/><rect x="860" y="205" width="5" height="16"/><rect x="861" y="206" width="3" height="14" fill="#000"/><rect x="870" y="185" width="1" height="24"/><rect x="868" y="187" width="5" height="19"/><rect x="869" y="188" width="3" height="17" fill="#000"/><rect x="878" y="174" width="1" height="19"/><rect x="876" y="174" width="5" height="16"/><rect x="877" y="175" width="3" height="14" fill="#000"/><rect x="886" y="169" width="1" height="13"/><rect x="884" y="172" width="5" height="3"/><rect x="885" y="173" width="3" height="1" fill="#000"/><rect x="894" y="171" width="1" height="14"/><rect x="892" y="172" width="5" height="9"/><rect x="893" y="173" width="3" height="7" fill="#fff"/><rect x="902" y="161" width="1" height="27"/><rect x="900" y="170" width="5" height="13"/><rect x="901" y="171" width="3" height="11" fill="#000"/><rect x="910" y="156" width="1" height="72"/><rect x="908" y="170" width="5" height="57"/><rect x="909" y="171" width="3" height="55" fill="#fff"/><rect x="918" y="222" width="1" height="16"/><rect x="916" y="227" width="5" height="1"/><rect x="926" y="223" width="1" height="11"/><rect x="924" y="224" width="5" height="6"/><rect x="925" y="225" width="3" height="4" fill="#000"/><rect x="934" y="216" width="1" height="13"/><rect x="932" y="219" width="5" height="6"/><rect x="933" y="220" width="3" height="4" fill="#000"/><rect x="942" y="205" width="1" height="29"/><rect x="940" y="219" width="5" height="2"/><rect x="950" y="199" width="1" height="25"/><rect x="948" y="211" width="5" height="10"/><rect x="949" y="212" width="3" height="8" fill="#000"/><rect x="958" y="178" width="1" height="56"/><rect x="956" y="195" width="5" height="17"/><rect x="957" y="196" width="3" height="15" fill="#000"/><rect x="966" y="182" width="1" height="15"/><rect x="964" y="189" width="5" height="7"/><rect x="965" y="190" width="3" height="5" fill="#000"/><rect x="974" y="187" width="1" height="10"/><rect x="972" y="190" width="5" height="5"/><rect x="973" y="191" width="3" height="3" fill="#fff"/><rect x="982" y="192" width="1" height="10"/><rect x="980" y="195" width="5" height="5"/><rect x="981" y="196" width="3" height="3" fill="#fff"/><rect x="990" y="189" width="1" height="46"/><rect x="988" y="199" width="5" height="19"/><rect x="989" y="200" width="3" height="17" fill="#fff"/><rect x="998" y="167" width="1" height="57"/><rect x="996" y="169" width="5" height="49"/><rect x="997" y="170" width="3" height="47" fill="#000"/><rect x="1006" y="166" width="1" height="50"/><rect x="1004" y="169" width="5" height="43"/><rect x="1005" y="170" width="3" height="41" fill="#fff"/><rect x="1014" y="196" width="1" height="17"/><rect x="1012" y="201" width="5" height="11"/><rect x="1013" y="202" width="3" height="9" fill="#000"/><rect x="1022" y="191" width="1" height="20"/><rect x="1020" y="194" width="5" height="10"/><rect x="1021" y="195" width="3" height="8" fill="#000"/><rect x="1030" y="192" width="1" height="16"/><rect x="1028" y="194" width="5" height="9"/><rect x="1029" y="195" width="3" height="7" fill="#fff"/><rect x="1038" y="160" width="1" height="48"/><rect x="1036" y="164" width="5" height="39"/><rect x="1037" y="165" width="3" height="37" fill="#000"/><rect x="1046" y="163" width="1" height="21"/><rect x="1044" y="163" width="5" height="15"/><rect x="1045" y="164" width="3" height="13" fill="#fff"/><rect x="1054" y="176" width="1" height="50"/><rect x="1052" y="177" width="5" height="37"/><rect x="1053" y="178" width="3" height="35" fill="#fff"/><rect x="1062" y="201" width="1" height="44"/><rect x="1060" y="213" width="5" height="13"/><rect x="1061" y="214" width="3" height="11" fill="#fff"/><rect x="1070" y="218" width="1" height="16"/><rect x="1068" y="227" width="5" height="1"/><rect x="1078" y="218" width="1" height="11"/><rect x="1076" y="220" width="5" height="9"/><rect x="1077" y="221" width="3" height="7" fill="#000"/><rect x="1086" y="217" width="1" height="42"/><rect x="1084" y="220" width="5" height="35"/><rect x="1085" y="221" width="3" height="33" fill="#fff"/><rect x="1094" y="243" width="1" height="40"/><rect x="1092" y="254" width="5" height="28"/><rect x="1093" y="255" width="3" height="26" fill="#fff"/><rect x="1102" y="268" width="1" height="34"/><rect x="1100" y="281" width="5" height="16"/><rect x="1101" y="282" width="3" height="14" fill="#fff"/><rect x="1110" y="276" width="1" height="28"/><rect x="1108" y="285" width="5" height="12"/><rect x="1109" y="286" width="3" height="10" fill="#000"/><rect x="1118" y="280" width="1" height="10"/><rect x="1116" y="286" width="5" height="3"/><rect x="1117" y="287" width="3" height="1" fill="#000"/><rect x="1126" y="279" width="1" height="13"/><rect x="1124" y="286" width="5" height="3"/><rect x="1125" y="287" width="3" height="1" fill="#fff"/><rect x="1134" y="271" width="1" height="26"/><rect x="1132" y="280" width="5" height="9"/><rect x="1133" y="281" width="3" height="7" fill="#000"/><rect x="1142" y="276" width="1" height="24"/><rect x="1140" y="280" width="5" height="18"/><rect x="1141" y="281" width="3" height="16" fill="#fff"/><rect x="1150" y="286" width="1" height="30"/><rect x="1148" y="296" width="5" height="8"/><rect x="1149" y="297" width="3" height="6" fill="#fff"/><rect x="1158" y="297" width="1" height="15"/><rect x="1156" y="303" width="5" height="4"/><rect x="1157" y="304" width="3" height="2" fill="#fff"/><rect x="1166" y="300" width="1" height="12"/><rect x="1164" y="306" width="5" height="3"/><rect x="1165" y="307" width="3" height="1" fill="#fff"/><rect x="1174" y="308" width="1" height="8"/><rect x="1172" y="309" width="5" height="7"/><rect x="1173" y="310" width="3" height="5" fill="#fff"/><rect x="1182" y="303" width="1" height="20"/><rect x="1180" y="311" width="5" height="4"/><rect x="1181" y="312" width="3" height="2" fill="#000"/><rect x="1190" y="303" width="1" height="17"/><rect x="1188" y="310" width="5" height="5"/><rect x="1189" y="311" width="3" height="3" fill="#fff"/><rect x="1198" y="305" width="1" height="32"/><rect x="1196" y="316" width="5" height="2"/><rect x="1206" y="312" width="1" height="11"/><rect x="1204" y="317" width="5" height="1"/><rect x="1214" y="309" width="1" height="15"/><rect x="1212" y="313" width="5" height="2"/><rect x="1222" y="312" width="1" height="10"/><rect x="1220" y="313" width="5" height="7"/><rect x="1221" y="314" width="3" height="5" fill="#fff"/><rect x="1230" y="312" width="1" height="14"/><rect x="1228" y="320" width="5" height="2"/><rect x="1238" y="311" width="1" height="69"/><rect x="1236" y="321" width="5" height="58"/><rect x="1237" y="322" width="3" height="56" fill="#fff"/><rect x="1246" y="360" width="1" height="27"/><rect x="1244" y="378" width="5" height="2"/><rect x="1254" y="363" width="1" height="19"/><rect x="1252" y="367" width="5" height="12"/><rect x="1253" y="368" width="3" height="10" fill="#000"/><rect x="1262" y="365" width="1" height="20"/><rect x="1260" y="370" width="5" height="6"/><rect x="1261" y="371" width="3" height="4" fill="#000"/><rect x="1270" y="363" width="1" height="8"/><rect x="1268" y="370" width="5" height="1"/><rect x="1278" y="362" width="1" height="19"/><rect x="1276" y="370" width="5" height="1"/><rect x="1286" y="358" width="1" height="27"/><rect x="1284" y="363" width="5" height="7"/><rect x="1285" y="364" width="3" height="5" fill="#000"/><rect x="1294" y="357" width="1" height="14"/><rect x="1292" y="357" width="5" height="8"/><rect x="1293" y="358" width="3" height="6" fill="#000"/><rect x="1302" y="355" width="1" height="20"/><rect x="1300" y="358" width="5" height="8"/><rect x="1301" y="359" width="3" height="6" fill="#fff"/><rect x="1310" y="358" width="1" height="23"/><rect x="1308" y="360" width="5" height="6"/><rect x="1309" y="361" width="3" height="4" fill="#000"/><rect x="1318" y="355" width="1" height="13"/><rect x="1316" y="356" width="5" height="4"/><rect x="1317" y="357" width="3" height="2" fill="#000"/><rect x="1326" y="346" width="1" height="17"/><rect x="1324" y="349" width="5" height="7"/><rect x="1325" y="350" width="3" height="5" fill="#000"/><rect x="1334" y="348" width="1" height="22"/><rect x="1332" y="349" width="5" height="16"/><rect x="1333" y="350" width="3" height="14" fill="#fff"/><rect x="1342" y="358" width="1" height="21"/><rect x="1340" y="365" width="5" height="1"/><rect x="1350" y="361" width="1" height="14"/><rect x="1348" y="365" width="5" height="3"/><rect x="1349" y="366" width="3" height="1" fill="#fff"/><rect x="1358" y="360" width="1" height="12"/><rect x="1356" y="364" width="5" height="1"/><rect x="1366" y="363" width="1" height="15"/><rect x="1364" y="365" width="5" height="11"/><rect x="1365" y="366" width="3" height="9" fill="#fff"/><rect x="1374" y="365" width="1" height="22"/><rect x="1372" y="376" width="5" height="5"/><rect x="1373" y="377" width="3" height="3" fill="#fff"/><rect x="1382" y="369" width="1" height="17"/><rect x="1380" y="381" width="5" height="2"/><rect x="1390" y="379" width="1" height="19"/><rect x="1388" y="382" width="5" height="14"/><rect x="1389" y="383" width="3" height="12" fill="#fff"/><rect x="1398" y="394" width="1" height="7"/><rect x="1396" y="396" width="5" height="4"/><rect x="1397" y="397" width="3" height="2" fill="#fff"/><rect x="1406" y="394" width="1" height="6"/><rect x="1404" y="396" width="5" height="3"/><rect x="1405" y="397" width="3" height="1" fill="#000"/><rect x="1414" y="391" width="1" height="8"/><rect x="1412" y="395" width="5" height="2"/><rect x="1422" y="393" width="1" height="15"/><rect x="1420" y="395" width="5" height="8"/><rect x="1421" y="396" width="3" height="6" fill="#fff"/><rect x="1430" y="383" width="1" height="43"/><rect x="1428" y="393" width="5" height="10"/><rect x="1429" y="394" width="3" height="8" fill="#000"/><rect x="1438" y="388" width="1" height="42"/><rect x="1436" y="392" width="5" height="35"/><rect x="1437" y="393" width="3" height="33" fill="#fff"/><rect x="1446" y="398" width="1" height="34"/><rect x="1444" y="399" width="5" height="28"/><rect x="1445" y="400" width="3" height="26" fill="#000"/><rect x="1454" y="398" width="1" height="22"/><rect x="1452" y="398" width="5" height="21"/><rect x="1453" y="399" width="3" height="19" fill="#000"/><rect x="1462" y="396" width="1" height="10"/><rect x="1460" y="399" width="5" height="1"/><rect x="1470" y="384" width="1" height="20"/><rect x="1468" y="388" width="5" height="13"/><rect x="1469" y="389" width="3" height="11" fill="#000"/><rect x="1478" y="386" width="1" height="23"/><rect x="1476" y="388" width="5" height="15"/><rect x="1477" y="389" width="3" height="13" fill="#fff"/><rect x="1486" y="385" width="1" height="23"/><rect x="1484" y="392" width="5" height="11"/><rect x="1485" y="393" width="3" height="9" fill="#000"/><rect x="1494" y="389" width="1" height="15"/><rect x="1492" y="392" width="5" height="8"/><rect x="1493" y="393" width="3" height="6" fill="#fff"/><rect x="1502" y="402" width="1" height="17"/><rect x="1500" y="403" width="5" height="10"/><rect x="1501" y="404" width="3" height="8" fill="#fff"/><rect x="1510" y="406" width="1" height="11"/><rect x="1508" y="410" width="5" height="3"/><rect x="1509" y="411" width="3" height="1" fill="#000"/><rect x="1518" y="404" width="1" height="9"/><rect x="1516" y="408" width="5" height="2"/><rect x="1526" y="399" width="1" height="27"/><rect x="1524" y="408" width="5" height="16"/><rect x="1525" y="409" width="3" height="14" fill="#fff"/><rect x="1534" y="407" width="1" height="25"/><rect x="1532" y="423" width="5" height="8"/><rect x="1533" y="424" width="3" height="6" fill="#fff"/><rect x="1542" y="423" width="1" height="20"/><rect x="1540" y="424" width="5" height="7"/><rect x="1541" y="425" width="3" height="5" fill="#000"/><rect x="1550" y="422" width="1" height="7"/><rect x="1548" y="424" width="5" height="2"/><rect x="1558" y="423" width="1" height="17"/><rect x="1556" y="425" width="5" height="13"/><rect x="1557" y="426" width="3" height="11" fill="#fff"/><rect x="1566" y="417" width="1" height="29"/><rect x="1564" y="422" width="5" height="16"/><rect x="1565" y="423" width="3" height="14" fill="#000"/><rect x="1574" y="418" width="1" height="17"/><rect x="1572" y="422" width="5" height="1"/><rect x="1582" y="417" width="1" height="24"/><rect x="1580" y="422" width="5" height="19"/><rect x="1581" y="423" width="3" height="17" fill="#fff"/><rect x="1590" y="438" width="1" height="11"/><rect x="1588" y="438" width="5" height="3"/><rect x="1589" y="439" width="3" height="1" fill="#000"/><rect x="1598" y="438" width="1" height="11"/><rect x="1596" y="439" width="5" height="5"/><rect x="1597" y="440" width="3" height="3" fill="#fff"/><rect x="1606" y="435" width="1" height="11"/><rect x="1604" y="440" width="5" height="5"/><rect x="1605" y="441" width="3" height="3" fill="#000"/><rect x="1614" y="440" width="1" height="14"/><rect x="1612" y="440" width="5" height="6"/><rect x="1613" y="441" width="3" height="4" fill="#fff"/><rect x="1622" y="430" width="1" height="17"/><rect x="1620" y="441" width="5" height="6"/><rect x="1621" y="442" width="3" height="4" fill="#000"/><rect x="1630" y="433" width="1" height="29"/><rect x="1628" y="441" width="5" height="19"/><rect x="1629" y="442" width="3" height="17" fill="#fff"/><rect x="1638" y="460" width="1" height="14"/><rect x="1636" y="460" width="5" height="4"/><rect x="1637" y="461" width="3" height="2" fill="#fff"/><rect x="1646" y="456" width="1" height="15"/><rect x="1644" y="464" width="5" height="1"/><rect x="1654" y="462" width="1" height="13"/><rect x="1652" y="463" width="5" height="10"/><rect x="1653" y="464" width="3" height="8" fill="#fff"/><rect x="1662" y="468" width="1" height="9"/><rect x="1660" y="472" width="5" height="2"/><rect x="1670" y="455" width="1" height="36"/><rect x="1668" y="473" width="5" height="9"/><rect x="1669" y="474" width="3" height="7" fill="#fff"/><rect x="1678" y="481" width="1" height="29"/><rect x="1676" y="481" width="5" height="17"/><rect x="1677" y="482" width="3" height="15" fill="#fff"/><rect x="1686" y="491" width="1" height="11"/><rect x="1684" y="492" width="5" height="6"/><rect x="1685" y="493" width="3" height="4" fill="#000"/><rect x="1694" y="490" width="1" height="8"/><rect x="1692" y="493" width="5" height="1"/><rect x="1702" y="483" width="1" height="13"/><rect x="1700" y="483" width="5" height="12"/><rect x="1701" y="484" width="3" height="10" fill="#000"/><rect x="1710" y="476" width="1" height="14"/><rect x="1708" y="484" width="5" height="3"/><rect x="1709" y="485" width="3" height="1" fill="#fff"/><rect x="1718" y="466" width="1" height="24"/><rect x="1716" y="467" width="5" height="20"/><rect x="1717" y="468" width="3" height="18" fill="#000"/><rect x="1726" y="459" width="1" height="16"/><rect x="1724" y="460" width="5" height="7"/><rect x="1725" y="461" width="3" height="5" fill="#000"/><rect x="1734" y="458" width="1" height="10"/><rect x="1732" y="460" width="5" height="1"/><rect x="1742" y="456" width="1" height="10"/><rect x="1740" y="462" width="5" height="2"/><rect x="1750" y="459" width="1" height="10"/><rect x="1748" y="462" width="5" height="6"/><rect x="1749" y="463" width="3" height="4" fill="#fff"/><rect x="1758" y="463" width="1" height="16"/><rect x="1756" y="468" width="5" height="2"/><rect x="1766" y="467" width="1" height="14"/><rect x="1764" y="469" width="5" height="2"/><rect x="1774" y="468" width="1" height="36"/><rect x="1772" y="469" width="5" height="35"/><rect x="1773" y="470" width="3" height="33" fill="#fff"/><rect x="1782" y="499" width="1" height="11"/><rect x="1780" y="503" width="5" height="4"/><rect x="1781" y="504" width="3" height="2" fill="#fff"/><rect x="1790" y="503" width="1" height="5"/><rect x="1788" y="505" width="5" height="2"/><rect x="1798" y="500" width="1" height="7"/><rect x="1796" y="501" width="5" height="5"/><rect x="1797" y="502" width="3" height="3" fill="#000"/><rect x="1806" y="486" width="1" height="18"/><rect x="1804" y="495" width="5" height="6"/><rect x="1805" y="496" width="3" height="4" fill="#000"/><rect x="1814" y="492" width="1" height="18"/><rect x="1812" y="495" width="5" height="14"/><rect x="1813" y="496" width="3" height="12" fill="#fff"/><rect x="1822" y="503" width="1" height="16"/><rect x="1820" y="510" width="5" height="2"/><rect x="1830" y="511" width="1" height="16"/><rect x="1828" y="512" width="5" height="8"/><rect x="1829" y="513" width="3" height="6" fill="#fff"/><rect x="1838" y="518" width="1" height="9"/><rect x="1836" y="522" width="5" height="1"/><rect x="1846" y="514" width="1" height="11"/><rect x="1844" y="519" width="5" height="5"/><rect x="1845" y="520" width="3" height="3" fill="#000"/></g></svg>
<div class="a" style="left:1864px;top:174px;width:3px;height:1px;background:#fff;"></div>
<div class="t" style="left:1870px;top:168px;font-size:12.5px;color:#fff;">1.11930</div>
<div class="a" style="left:1864px;top:223px;width:3px;height:1px;background:#fff;"></div>
<div class="t" style="left:1870px;top:217px;font-size:12.5px;color:#fff;">1.11370</div>
<div class="a" style="left:1864px;top:272px;width:3px;height:1px;background:#fff;"></div>
<div class="t" style="left:1870px;top:266px;font-size:12.5px;color:#fff;">1.10810</div>
<div class="a" style="left:1864px;top:321px;width:3px;height:1px;background:#fff;"></div>
<div class="t" style="left:1870px;top:315px;font-size:12.5px;color:#fff;">1.10260</div>
<div class="a" style="left:1864px;top:370px;width:3px;height:1px;background:#fff;"></div>
<div class="t" style="left:1870px;top:364px;font-size:12.5px;color:#fff;">1.09700</div>
<div class="a" style="left:1864px;top:419px;width:3px;height:1px;background:#fff;"></div>
<div class="t" style="left:1870px;top:413px;font-size:12.5px;color:#fff;">1.09140</div>
<div class="a" style="left:1864px;top:468px;width:3px;height:1px;background:#fff;"></div>
<div class="t" style="left:1870px;top:462px;font-size:12.5px;color:#fff;">1.08580</div>
<div class="a" style="left:1864px;top:518px;width:3px;height:1px;background:#fff;"></div>
<div class="a" style="left:1865px;top:511px;width:55px;height:14px;background:#fff;"></div>
<div class="t" style="left:1870px;top:512px;font-size:12.5px;color:#000;">1.08007</div>
<div class="a" style="left:14px;top:537px;width:1px;height:3px;background:#fff;"></div>
<div class="t" style="left:12.5px;top:541.2px;font-size:12.5px;color:#fff;">30 Aug 2024</div>
<div class="a" style="left:110px;top:537px;width:1px;height:3px;background:#fff;"></div>
<div class="t" style="left:108.5px;top:541.2px;font-size:12.5px;color:#fff;">3 Sep 00:00</div>
<div class="a" style="left:206px;top:537px;width:1px;height:3px;background:#fff;"></div>
<div class="t" style="left:204.5px;top:541.2px;font-size:12.5px;color:#fff;">5 Sep 00:00</div>
<div class="a" style="left:302px;top:537px;width:1px;height:3px;background:#fff;"></div>
<div class="t" style="left:300.5px;top:541.2px;font-size:12.5px;color:#fff;">9 Sep 00:00</div>
<div class="a" style="left:398px;top:537px;width:1px;height:3px;background:#fff;"></div>
<div class="t" style="left:396.5px;top:541.2px;font-size:12.5px;color:#fff;">11 Sep 00:00</div>
<div class="a" style="left:494px;top:537px;width:1px;height:3px;background:#fff;"></div>
<div class="t" style="left:492.5px;top:541.2px;font-size:12.5px;color:#fff;">13 Sep 00:00</div>
<div class="a" style="left:590px;top:537px;width:1px;height:3px;background:#fff;"></div>
<div class="t" style="left:588.5px;top:541.2px;font-size:12.5px;color:#fff;">17 Sep 00:00</div>
<div class="a" style="left:686px;top:537px;width:1px;height:3px;background:#fff;"></div>
<div class="t" style="left:684.5px;top:541.2px;font-size:12.5px;color:#fff;">19 Sep 00:00</div>
<div class="a" style="left:782px;top:537px;width:1px;height:3px;background:#fff;"></div>
<div class="t" style="left:780.5px;top:541.2px;font-size:12.5px;color:#fff;">23 Sep 00:00</div>
<div class="a" style="left:878px;top:537px;width:1px;height:3px;background:#fff;"></div>
<div class="t" style="left:876.5px;top:541.2px;font-size:12.5px;color:#fff;">25 Sep 00:00</div>
<div class="a" style="left:974px;top:537px;width:1px;height:3px;background:#fff;"></div>
<div class="t" style="left:972.5px;top:541.2px;font-size:12.5px;color:#fff;">27 Sep 00:00</div>
<div class="a" style="left:1070px;top:537px;width:1px;height:3px;background:#fff;"></div>
<div class="t" style="left:1068.5px;top:541.2px;font-size:12.5px;color:#fff;">1 Oct 00:00</div>
<div class="a" style="left:1166px;top:537px;width:1px;height:3px;background:#fff;"></div>
<div class="t" style="left:1164.5px;top:541.2px;font-size:12.5px;color:#fff;">3 Oct 00:00</div>
<div class="a" style="left:1262px;top:537px;width:1px;height:3px;background:#fff;"></div>
<div class="t" style="left:1260.5px;top:541.2px;font-size:12.5px;color:#fff;">7 Oct 00:00</div>
<div class="a" style="left:1358px;top:537px;width:1px;height:3px;background:#fff;"></div>
<div class="t" style="left:1356.5px;top:541.2px;font-size:12.5px;color:#fff;">9 Oct 00:00</div>
<div class="a" style="left:1454px;top:537px;width:1px;height:3px;background:#fff;"></div>
<div class="t" style="left:1452.5px;top:541.2px;font-size:12.5px;color:#fff;">11 Oct 00:00</div>
<div class="a" style="left:1550px;top:537px;width:1px;height:3px;background:#fff;"></div>
<div class="t" style="left:1548.5px;top:541.2px;font-size:12.5px;color:#fff;">15 Oct 00:00</div>
<div class="a" style="left:1646px;top:537px;width:1px;height:3px;background:#fff;"></div>
<div class="t" style="left:1644.5px;top:541.2px;font-size:12.5px;color:#fff;">17 Oct 00:00</div>
<div class="a" style="left:1742px;top:537px;width:1px;height:3px;background:#fff;"></div>
<div class="t" style="left:1740.5px;top:541.2px;font-size:12.5px;color:#fff;">21 Oct 00:00</div>
<div class="a" style="left:1838px;top:537px;width:1px;height:3px;background:#fff;"></div>
<div class="t" style="left:1836.5px;top:541.2px;font-size:12.5px;color:#fff;">23 Oct 00:00</div>
<svg style="left:17px;top:143px" width="10" height="6"><path d="M0 5.5L4.5 0.5 9 5.5z" fill="#fff"/></svg>
<div class="t" style="left:31px;top:140.3px;font-size:12.4px;color:#fff;">EURUSD,H4  1.07954 1.08054 1.07938 1.08007</div>
<div class="t" style="left:1588px;top:141px;font-size:12.2px;color:#fff;">Звезда Фортуны 1.0 универсал Sabit Dosaev</div>
<svg style="left:1844px;top:139px" width="15" height="15"><circle cx="7.5" cy="7.5" r="6.3" fill="none" stroke="#fff" stroke-width="1.2"/><circle cx="5.3" cy="5.8" r="0.9" fill="#fff"/><circle cx="9.7" cy="5.8" r="0.9" fill="#fff"/><path d="M4.3 8.8q3.2 3.3 6.4 0" stroke="#fff" stroke-width="1.1" fill="none"/></svg>
<div class="a" style="left:17px;top:159px;width:125px;height:71px;background:linear-gradient(180deg,#5a5aff 0%,#3030e8 35%,#0c0cc8 70%,#0000a8 100%);"></div>
<div class="a" style="left:144px;top:159px;width:124px;height:71px;background:linear-gradient(180deg,#5a5aff 0%,#3030e8 35%,#0c0cc8 70%,#0000a8 100%);"></div>
<div class="a" style="left:76px;top:159px;width:133px;height:27px;background:#000;"></div>
<div class="a" style="left:79px;top:159px;width:127px;height:24px;background:#fff;"></div>
<div class="a" style="left:79px;top:159px;width:24px;height:24px;background:linear-gradient(180deg,#f4f4f4,#d8d8d8);border-right:1px solid #b8b8b8"></div>
<div class="a" style="left:182px;top:159px;width:24px;height:24px;background:linear-gradient(180deg,#f4f4f4,#d8d8d8);border-left:1px solid #b8b8b8"></div>
<svg style="left:87px;top:168px" width="9" height="6"><path d="M0.5 0.5h7L4 5z" fill="#000"/></svg>
<svg style="left:189px;top:167px" width="9" height="6"><path d="M0.5 5.5h7L4 1z" fill="#000"/></svg>
<div class="t" style="left:150px;top:164px;font-size:14.5px;color:#000;">1.00</div>
<div class="a" style="left:21px;top:185px;width:52px;height:1px;background:#8c8cff;"></div>
<div class="a" style="left:212px;top:185px;width:52px;height:1px;background:#8c8cff;"></div>
<div class="t" style="left:30.5px;top:165.2px;font-size:13.5px;color:#eef;letter-spacing:-0.3px">SELL</div>
<div class="t" style="left:224px;top:165.2px;font-size:13.5px;color:#eef;letter-spacing:-0.3px">BUY</div>
<div class="t" style="left:36.5px;top:208.3px;font-size:15px;color:#fff;font-weight:bold">1.08</div>
<div class="t" style="left:69.5px;top:189.1px;font-size:37.7px;color:#fff;">00</div>
<div class="t" style="left:115px;top:190.6px;font-size:14.6px;color:#fff;font-weight:bold">7</div>
<div class="t" style="left:162.2px;top:208.3px;font-size:15px;color:#fff;font-weight:bold">1.08</div>
<div class="t" style="left:196.3px;top:189.1px;font-size:37.7px;color:#fff;">01</div>
<div class="t" style="left:241px;top:190.6px;font-size:14.6px;color:#fff;font-weight:bold">3</div>
<div class="a" style="left:9px;top:560px;width:1911px;height:2px;background:#fdfdfd;"></div>
<div class="a" style="left:9px;top:562px;width:1911px;height:25px;background:#f0f0f0;"></div>
<div class="a" style="left:9px;top:562px;width:1911px;height:1px;background:#2a2a2a;"></div>
<div class="a" style="left:9px;top:563px;width:8px;height:23px;background:linear-gradient(90deg,#9a9a9a,#e0e0e0);"></div>
<div class="a" style="left:16px;top:562px;width:104px;height:24px;background:#fff;border:1px solid #1a1a1a;border-top:none"></div>
<div class="t" style="left:29.5px;top:567.6px;font-size:13.6px;color:#000;">EURUSD,H4</div>
<div class="t" style="left:132.3px;top:567.6px;font-size:13.6px;color:#6c7178;">USDCHF,H4</div>
<div class="t" style="left:236px;top:567.6px;font-size:13.6px;color:#6c7178;">GBPUSD,H4</div>
<div class="t" style="left:341px;top:567.6px;font-size:13.6px;color:#6c7178;">USDJPY,H4</div>
<div class="a" style="left:224px;top:566px;width:1px;height:18px;background:#505050;"></div>
<div class="a" style="left:328px;top:566px;width:1px;height:18px;background:#505050;"></div>
<div class="a" style="left:428px;top:566px;width:1px;height:18px;background:#505050;"></div>
<svg style="left:1887px;top:569px" width="6" height="9"><path d="M5 0v8L0 4z" fill="#a0a0a0"/></svg>
<svg style="left:1911px;top:569px" width="6" height="9"><path d="M0 0v8l5-4z" fill="#a0a0a0"/></svg>
<div class="a" style="left:9px;top:587px;width:1911px;height:1px;background:#fcfcfc;"></div>
<div class="a" style="left:9px;top:592px;width:1911px;height:408px;background:#f0f0f0;"></div>
<svg style="left:15px;top:594px" width="9" height="9"><path d="M1 1L8 8M8 1L1 8" stroke="#000" stroke-width="1.5"/></svg>
<div class="a" style="left:12px;top:610px;width:16px;height:385px;background:linear-gradient(180deg,#b8d0ec 0%,#a8c2e2 50%,#98b2d6 100%);"></div>
<div class="t" style="left:14px;top:992px;font-size:13.6px;color:#1a1a1a;transform-origin:0 0;transform:rotate(-90deg)">Тестер</div>
<div class="a" style="left:29px;top:592px;width:1891px;height:1px;background:#a0a0a0;"></div>
<div class="a" style="left:29px;top:592px;width:1px;height:376px;background:#a0a0a0;"></div>
<div class="a" style="left:30px;top:593px;width:1890px;height:375px;background:#fff;"></div>
<div class="a" style="left:30px;top:593px;width:1890px;height:24px;background:#ebebeb;"></div>
<div class="a" style="left:30px;top:617px;width:1890px;height:1px;background:#cdcdcd;"></div>
<div class="t" style="left:38px;top:597.7px;font-size:15px;color:#000;">Баров в истории</div>
<div class="t" style="right:1310.5px;top:597.7px;font-size:15px;letter-spacing:-0.45px">284715</div>
<div class="t" style="left:678px;top:597.7px;font-size:15px;color:#000;">Смоделировано тиков</div>
<div class="t" style="right:667.5px;top:597.7px;font-size:15px;letter-spacing:-0.45px">62040183</div>
<div class="t" style="left:1321px;top:597.7px;font-size:15px;color:#000;">Качество моделирования</div>
<div class="t" style="right:20px;top:597.7px;font-size:15px;letter-spacing:-0.45px">90.00%</div>
<div class="a" style="left:30px;top:618px;width:1890px;height:24px;background:#fff;"></div>
<div class="a" style="left:30px;top:642px;width:1890px;height:1px;background:#cdcdcd;"></div>
<div class="t" style="left:38px;top:622.7px;font-size:15px;color:#000;">Ошибки рассогласования графиков</div>
<div class="t" style="right:1310.5px;top:622.7px;font-size:15px;letter-spacing:-0.45px">21</div>
<div class="a" style="left:30px;top:643px;width:1890px;height:24px;background:#ebebeb;"></div>
<div class="a" style="left:30px;top:667px;width:1890px;height:1px;background:#cdcdcd;"></div>
<div class="t" style="left:38px;top:647.7px;font-size:15px;color:#000;">Начальный депозит</div>
<div class="t" style="right:1310.5px;top:647.7px;font-size:15px;letter-spacing:-0.45px">100.00</div>
<div class="t" style="left:1321px;top:647.7px;font-size:15px;color:#000;">Спред</div>
<div class="t" style="right:20px;top:647.7px;font-size:15px;letter-spacing:-0.45px">20</div>
<div class="a" style="left:30px;top:668px;width:1890px;height:24px;background:#fff;"></div>
<div class="a" style="left:30px;top:692px;width:1890px;height:1px;background:#cdcdcd;"></div>
<div class="t" style="left:38px;top:672.7px;font-size:15px;color:#000;">Чистая прибыль</div>
<div class="t" style="right:1310.5px;top:672.7px;font-size:15px;letter-spacing:-0.45px">17527036.74</div>
<div class="t" style="left:678px;top:672.7px;font-size:15px;color:#000;">Общая прибыль</div>
<div class="t" style="right:667.5px;top:672.7px;font-size:15px;letter-spacing:-0.45px">24028505.19</div>
<div class="t" style="left:1321px;top:672.7px;font-size:15px;color:#000;">Общий убыток</div>
<div class="t" style="right:20px;top:672.7px;font-size:15px;letter-spacing:-0.45px">-6501468.45</div>
<div class="a" style="left:30px;top:693px;width:1890px;height:24px;background:#ebebeb;"></div>
<div class="a" style="left:30px;top:717px;width:1890px;height:1px;background:#cdcdcd;"></div>
<div class="t" style="left:38px;top:697.7px;font-size:15px;color:#000;">Прибыльность</div>
<div class="t" style="right:1310.5px;top:697.7px;font-size:15px;letter-spacing:-0.45px">3.70</div>
<div class="t" style="left:678px;top:697.7px;font-size:15px;color:#000;">Матожидание выигрыша</div>
<div class="t" style="right:667.5px;top:697.7px;font-size:15px;letter-spacing:-0.45px">68464.99</div>
<div class="a" style="left:30px;top:718px;width:1890px;height:24px;background:#fff;"></div>
<div class="a" style="left:30px;top:742px;width:1890px;height:1px;background:#cdcdcd;"></div>
<div class="t" style="left:38px;top:722.7px;font-size:15px;color:#000;">Абсолютная просадка</div>
<div class="t" style="right:1310.5px;top:722.7px;font-size:15px;letter-spacing:-0.45px">16.77</div>
<div class="t" style="left:678px;top:722.7px;font-size:15px;color:#000;">Максимальная просадка</div>
<div class="t" style="right:667.5px;top:722.7px;font-size:15px;letter-spacing:-0.45px">2152000.00 (28.60%)</div>
<div class="t" style="left:1321px;top:722.7px;font-size:15px;color:#000;">Относительная просадка</div>
<div class="t" style="right:20px;top:722.7px;font-size:15px;letter-spacing:-0.45px">81.67% (8764.92)</div>
<div class="a" style="left:30px;top:743px;width:1890px;height:24px;background:#ebebeb;"></div>
<div class="a" style="left:30px;top:767px;width:1890px;height:1px;background:#cdcdcd;"></div>
<div class="t" style="left:38px;top:747.7px;font-size:15px;color:#000;">Всего сделок</div>
<div class="t" style="right:1310.5px;top:747.7px;font-size:15px;letter-spacing:-0.45px">256</div>
<div class="t" style="left:678px;top:747.7px;font-size:15px;color:#000;">Короткие позиции (% выигравших)</div>
<div class="t" style="right:667.5px;top:747.7px;font-size:15px;letter-spacing:-0.45px">174 (95.98%)</div>
<div class="t" style="left:1321px;top:747.7px;font-size:15px;color:#000;">Длинные позиции (% выигравших)</div>
<div class="t" style="right:20px;top:747.7px;font-size:15px;letter-spacing:-0.45px">82 (95.12%)</div>
<div class="a" style="left:30px;top:768px;width:1890px;height:24px;background:#fff;"></div>
<div class="a" style="left:30px;top:792px;width:1890px;height:1px;background:#cdcdcd;"></div>
<div class="t" style="left:678px;top:772.7px;font-size:15px;color:#000;">Прибыльные сделки (% от всех)</div>
<div class="t" style="right:667.5px;top:772.7px;font-size:15px;letter-spacing:-0.45px">245 (95.70%)</div>
<div class="t" style="left:1321px;top:772.7px;font-size:15px;color:#000;">Убыточные сделки (% от всех)</div>
<div class="t" style="right:20px;top:772.7px;font-size:15px;letter-spacing:-0.45px">11 (4.30%)</div>
<div class="a" style="left:30px;top:793px;width:1890px;height:24px;background:#ebebeb;"></div>
<div class="a" style="left:30px;top:817px;width:1890px;height:1px;background:#cdcdcd;"></div>
<div class="t" style="right:1310.5px;top:797.7px;font-size:15px;letter-spacing:0">Самая большая</div>
<div class="t" style="left:678px;top:797.7px;font-size:15px;color:#000;">прибыльная сделка</div>
<div class="t" style="right:667.5px;top:797.7px;font-size:15px;letter-spacing:-0.45px">1300756.67</div>
<div class="t" style="left:1321px;top:797.7px;font-size:15px;color:#000;">убыточная сделка</div>
<div class="t" style="right:20px;top:797.7px;font-size:15px;letter-spacing:-0.45px">-732798.42</div>
<div class="a" style="left:30px;top:818px;width:1890px;height:24px;background:#fff;"></div>
<div class="a" style="left:30px;top:842px;width:1890px;height:1px;background:#cdcdcd;"></div>
<div class="t" style="right:1310.5px;top:822.7px;font-size:15px;letter-spacing:0">Средняя</div>
<div class="t" style="left:678px;top:822.7px;font-size:15px;color:#000;">прибыльная сделка</div>
<div class="t" style="right:667.5px;top:822.7px;font-size:15px;letter-spacing:-0.45px">98075.53</div>
<div class="t" style="left:1321px;top:822.7px;font-size:15px;color:#000;">убыточная сделка</div>
<div class="t" style="right:20px;top:822.7px;font-size:15px;letter-spacing:-0.45px">-591042.59</div>
<div class="a" style="left:30px;top:843px;width:1890px;height:24px;background:#ebebeb;"></div>
<div class="a" style="left:30px;top:867px;width:1890px;height:1px;background:#cdcdcd;"></div>
<div class="t" style="right:1310.5px;top:847.7px;font-size:15px;letter-spacing:0">Максимальное количество</div>
<div class="t" style="left:678px;top:847.7px;font-size:15px;color:#000;">непрерывных выигрышей (прибыль)</div>
<div class="t" style="right:667.5px;top:847.7px;font-size:15px;letter-spacing:-0.45px">84 (11466285.43)</div>
<div class="t" style="left:1321px;top:847.7px;font-size:15px;color:#000;">непрерывных проигрышей (убыток)</div>
<div class="t" style="right:20px;top:847.7px;font-size:15px;letter-spacing:-0.45px">1 (-732798.42)</div>
<div class="a" style="left:30px;top:868px;width:1890px;height:24px;background:#fff;"></div>
<div class="a" style="left:30px;top:892px;width:1890px;height:1px;background:#cdcdcd;"></div>
<div class="t" style="right:1310.5px;top:872.7px;font-size:15px;letter-spacing:0">Макс.</div>
<div class="t" style="left:678px;top:872.7px;font-size:15px;color:#000;">непрерывная прибыль (число выигрышей)</div>
<div class="t" style="right:667.5px;top:872.7px;font-size:15px;letter-spacing:-0.45px">11466285.43 (84)</div>
<div class="t" style="left:1321px;top:872.7px;font-size:15px;color:#000;">непрерывный убыток (число проигрышей)</div>
<div class="t" style="right:20px;top:872.7px;font-size:15px;letter-spacing:-0.45px">-732798.42 (1)</div>
<div class="a" style="left:30px;top:893px;width:1890px;height:24px;background:#ebebeb;"></div>
<div class="a" style="left:30px;top:917px;width:1890px;height:1px;background:#cdcdcd;"></div>
<div class="t" style="right:1310.5px;top:897.7px;font-size:15px;letter-spacing:0">Средний</div>
<div class="t" style="left:678px;top:897.7px;font-size:15px;color:#000;">непрерывный выигрыш</div>
<div class="t" style="right:667.5px;top:897.7px;font-size:15px;letter-spacing:-0.45px">20</div>
<div class="t" style="left:1321px;top:897.7px;font-size:15px;color:#000;">непрерывный проигрыш</div>
<div class="t" style="right:20px;top:897.7px;font-size:15px;letter-spacing:-0.45px">1</div>
<div class="a" style="left:675px;top:619px;width:1245px;height:23px;background:#00ff00;border:1px solid #2f7fc0;border-right:none"></div>
<div class="a" style="left:676px;top:620px;width:3px;height:21px;background:#7a7a7a;"></div>
<div class="a" style="left:30px;top:968px;width:1890px;height:24px;background:#f0f0f0;"></div>
<div class="a" style="left:30px;top:967px;width:279px;height:1px;background:#111;"></div>
<div class="a" style="left:372px;top:967px;width:1548px;height:1px;background:#111;"></div>
<div class="a" style="left:309px;top:967px;width:64px;height:24px;background:#fff;border:1px solid #111;border-top:none"></div>
<div class="a" style="left:29px;top:967px;width:1px;height:25px;background:#a0a0a0;"></div>
<div class="t" style="left:45px;top:972.4px;font-size:15px;color:#6e6e6e;">Настройки</div>
<div class="t" style="left:145px;top:972.4px;font-size:15px;color:#6e6e6e;">Результаты</div>
<div class="t" style="left:247px;top:972.4px;font-size:15px;color:#6e6e6e;">График</div>
<div class="t" style="left:322px;top:972.4px;font-size:15px;color:#000;">Отчет</div>
<div class="t" style="left:386px;top:972.4px;font-size:15px;color:#6e6e6e;">Журнал</div>
<div class="a" style="left:132px;top:972px;width:1px;height:17px;background:#505050;"></div>
<div class="a" style="left:234px;top:972px;width:1px;height:17px;background:#505050;"></div>
<div class="a" style="left:453px;top:972px;width:1px;height:17px;background:#505050;"></div>
<div class="a" style="left:9px;top:994px;width:1911px;height:1px;background:#fdfdfd;"></div>
<div class="a" style="left:9px;top:999px;width:1911px;height:1px;background:#a0a0a0;"></div>
<div class="a" style="left:9px;top:1000px;width:1911px;height:20px;background:#f0f0f0;"></div>
<div class="t" style="left:11px;top:1008.6px;font-size:15px;color:#000;">Для вызова справки нажмите F1</div>
<div class="a" style="left:1033px;top:1004px;width:1px;height:16px;background:#a0a0a0;"></div>
<div class="a" style="left:1182px;top:1004px;width:1px;height:16px;background:#a0a0a0;"></div>
<div class="a" style="left:1313px;top:1004px;width:1px;height:16px;background:#a0a0a0;"></div>
<div class="a" style="left:1402px;top:1004px;width:1px;height:16px;background:#a0a0a0;"></div>
<div class="a" style="left:1491px;top:1004px;width:1px;height:16px;background:#a0a0a0;"></div>
<div class="a" style="left:1576px;top:1004px;width:1px;height:16px;background:#a0a0a0;"></div>
<div class="a" style="left:1663px;top:1004px;width:1px;height:16px;background:#a0a0a0;"></div>
<div class="a" style="left:1747px;top:1004px;width:1px;height:16px;background:#a0a0a0;"></div>
<div class="t" style="left:1039px;top:1008.6px;font-size:15px;color:#000;letter-spacing:-0.4px">Default</div>
<div class="t" style="left:1187px;top:1008.6px;font-size:15px;color:#000;letter-spacing:-0.4px">2024.09.25 16:00</div>
<div class="t" style="left:1318px;top:1008.6px;font-size:15px;color:#000;letter-spacing:-0.4px">O: 1.11975</div>
<div class="t" style="left:1407px;top:1008.6px;font-size:15px;color:#000;letter-spacing:-0.4px">H: 1.12140</div>
<div class="t" style="left:1496px;top:1008.6px;font-size:15px;color:#000;letter-spacing:-0.4px">L: 1.11327</div>
<div class="t" style="left:1581px;top:1008.6px;font-size:15px;color:#000;letter-spacing:-0.4px">C: 1.11342</div>
<div class="t" style="left:1668px;top:1008.6px;font-size:15px;color:#000;letter-spacing:-0.4px">V: 11206</div>
<div class="t" style="left:1789px;top:1008.6px;font-size:15px;color:#000;letter-spacing:-0.4px">1776/4 kb</div>
<svg style="left:1753px;top:1006px" width="32" height="14"><g fill="#5a8a10"><rect x="2" y="1" width="2" height="13"/><rect x="5" y="1" width="2" height="13"/><rect x="8" y="1" width="2" height="13"/><rect x="11" y="1" width="2" height="13"/><rect x="14" y="1" width="2" height="13"/><rect x="17" y="1" width="2" height="13"/><rect x="20" y="1" width="2" height="13"/><rect x="23" y="1" width="2" height="13"/><rect x="26" y="1" width="2" height="13"/><rect x="29" y="1" width="2" height="13"/></g><g fill="#1a3a8a"><rect x="17" y="6" width="2" height="6"/><rect x="20" y="5" width="2" height="6"/><rect x="23" y="5" width="2" height="6"/><rect x="26" y="4" width="2" height="6"/><rect x="29" y="4" width="2" height="6"/></g></svg>
<div class="a" style="left:0px;top:1020px;width:1920px;height:18px;background:linear-gradient(90deg,#dcdcdc 0%,#dcdcdc 93%,#d4ecd2 96%,#cfeccc 100%);"></div>
<div class="a" style="left:695px;top:1036px;width:13px;height:2px;background:#3aa0f0;"></div>
<div class="a" style="left:710px;top:1036px;width:13px;height:2px;background:#3a8ee0;"></div>
<div class="a" style="left:745px;top:1031px;width:266px;height:7px;background:#f8f8f8;border-radius:7px 7px 0 0;border:1px solid #d0d0d0;border-bottom:none"></div>
<div class="a" style="left:1037px;top:1036px;width:23px;height:2px;background:#fafafa;"></div>
<div class="a" style="left:1090px;top:1034px;width:22px;height:4px;background:#20b0d0;border-radius:11px 11px 0 0"></div>
<div class="a" style="left:1132px;top:1026px;width:48px;height:12px;background:#eaeaea;border-radius:5px 5px 0 0"></div>
<div class="a" style="left:1141px;top:1034px;width:30px;height:4px;background:#174a8c;"></div>
<div class="a" style="left:1205px;top:1035px;width:20px;height:3px;background:#48c848;border-radius:8px 8px 0 0"></div>
<div class="t" style="left:62px;top:1032px;font-size:14px;color:#222;">1°C</div>
<div class="t" style="left:1829px;top:1032.5px;font-size:14px;color:#222;">10:25</div>
</body></html>
